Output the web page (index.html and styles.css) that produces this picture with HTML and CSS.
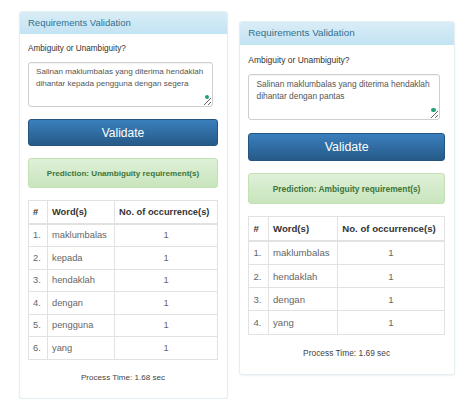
FILE: index.html
```html
<!DOCTYPE html>
<html>
<head>
<meta charset="utf-8">
<link rel="stylesheet" href="styles.css">
</head>
<body>
<div class="page">
  <div class="panel panel--a">
    <div class="panel-heading">Requirements Validation</div>
    <div class="panel-body">
      <div class="label">Ambiguity or Unambiguity?</div>
      <div class="field">
        <textarea class="input">Salinan maklumbalas yang diterima hendaklah dihantar kepada pengguna dengan segera</textarea>
        <span class="dot"></span>
      </div>
      <button class="btn">Validate</button>
      <div class="alert">Prediction: Unambiguity requirement(s)</div>
      <table class="words">
        <thead>
          <tr><th class="c-num">#</th><th class="c-word">Word(s)</th><th class="c-occ">No. of occurrence(s)</th></tr>
        </thead>
        <tbody>
          <tr><td class="c-num">1.</td><td class="c-word">maklumbalas</td><td class="c-occ">1</td></tr>
          <tr><td class="c-num">2.</td><td class="c-word">kepada</td><td class="c-occ">1</td></tr>
          <tr><td class="c-num">3.</td><td class="c-word">hendaklah</td><td class="c-occ">1</td></tr>
          <tr><td class="c-num">4.</td><td class="c-word">dengan</td><td class="c-occ">1</td></tr>
          <tr><td class="c-num">5.</td><td class="c-word">pengguna</td><td class="c-occ">1</td></tr>
          <tr><td class="c-num">6.</td><td class="c-word">yang</td><td class="c-occ">1</td></tr>
        </tbody>
      </table>
      <div class="time">Process Time: 1.68 sec</div>
    </div>
  </div>
  <div class="panel panel--b">
    <div class="panel-heading">Requirements Validation</div>
    <div class="panel-body">
      <div class="label">Ambiguity or Unambiguity?</div>
      <div class="field">
        <textarea class="input">Salinan maklumbalas yang diterima hendaklah dihantar dengan pantas</textarea>
        <span class="dot"></span>
      </div>
      <button class="btn">Validate</button>
      <div class="alert">Prediction: Ambiguity requirement(s)</div>
      <table class="words">
        <thead>
          <tr><th class="c-num">#</th><th class="c-word">Word(s)</th><th class="c-occ">No. of occurrence(s)</th></tr>
        </thead>
        <tbody>
          <tr><td class="c-num">1.</td><td class="c-word">maklumbalas</td><td class="c-occ">1</td></tr>
          <tr><td class="c-num">2.</td><td class="c-word">hendaklah</td><td class="c-occ">1</td></tr>
          <tr><td class="c-num">3.</td><td class="c-word">dengan</td><td class="c-occ">1</td></tr>
          <tr><td class="c-num">4.</td><td class="c-word">yang</td><td class="c-occ">1</td></tr>
        </tbody>
      </table>
      <div class="time">Process Time: 1.69 sec</div>
    </div>
  </div>
</div>
</body>
</html>
```
FILE: styles.css
```css
html, body {
  margin: 0;
  padding: 0;
  background: #ffffff;
}
body {
  font-family: "Liberation Sans", Arial, sans-serif;
  color: #333;
}
.page {
  display: flex;
  align-items: flex-start;
  gap: 11px;
  padding: 11px 0 0 19px;
}
.panel {
  --k: 1;
  box-sizing: border-box;
  width: calc(209px * var(--k));
  background: #fff;
  border: 1px solid #e2eef2;
  border-radius: 3px;
  box-shadow: 0 1px 2px rgba(0, 0, 0, 0.06);
  overflow: hidden;
}
.panel--b {
  --k: 1.035;
  margin-top: 10px;
}
.panel-heading {
  height: calc(21px * var(--k));
  display: flex;
  align-items: center;
  padding-left: calc(8px * var(--k));
  background: linear-gradient(#d9edf7, #c4e3f3);
  border-bottom: 1px solid #bce8f1;
  color: #31708f;
  font-size: calc(9.5px * var(--k));
}
.panel-body {
  padding: calc(9px * var(--k)) calc(9px * var(--k)) calc(14px * var(--k)) calc(8px * var(--k));
}
.label {
  font-size: calc(8.2px * var(--k));
  line-height: calc(12px * var(--k));
  color: #333;
}
.field {
  position: relative;
  margin-top: calc(7px * var(--k));
  width: calc(185px * var(--k));
  height: calc(45px * var(--k));
}
.input {
  display: block;
  box-sizing: border-box;
  width: 100%;
  height: 100%;
  margin: 0;
  padding: calc(3px * var(--k)) calc(7px * var(--k));
  border: 1px solid #cfcfcf;
  border-radius: 3px;
  font-family: "Liberation Sans", Arial, sans-serif;
  font-size: calc(8.1px * var(--k));
  line-height: calc(12px * var(--k));
  color: #555;
  background: #fff;
  box-shadow: inset 0 1px 1px rgba(0, 0, 0, 0.05);
}
.dot {
  position: absolute;
  right: calc(4px * var(--k));
  bottom: calc(8px * var(--k));
  width: calc(4px * var(--k));
  height: calc(4px * var(--k));
  border-radius: 50%;
  background: #1fa37a;
}
.btn {
  display: block;
  box-sizing: border-box;
  width: calc(190px * var(--k));
  height: calc(27px * var(--k));
  margin: calc(12px * var(--k)) 0 0 0;
  padding: 0;
  border: 1px solid #245580;
  border-radius: 3px;
  background: linear-gradient(#3a7fbd, #265a88);
  color: #fff;
  font-family: "Liberation Sans", Arial, sans-serif;
  font-size: calc(12px * var(--k));
}
.alert {
  box-sizing: border-box;
  width: calc(190px * var(--k));
  height: calc(30px * var(--k));
  margin-top: calc(12px * var(--k));
  display: flex;
  align-items: center;
  justify-content: center;
  background: linear-gradient(#dff0d8, #c8e5bc);
  border: 1px solid #c2e2b4;
  border-radius: 3px;
  color: #3c763d;
  font-weight: bold;
  font-size: calc(8.1px * var(--k));
}
.words {
  width: calc(190px * var(--k));
  margin-top: calc(12px * var(--k));
  border-collapse: collapse;
  border: 1px solid #e2e2e2;
  font-size: calc(9.3px * var(--k));
}
.words th, .words td {
  border: 1px solid #e2e2e2;
  height: calc(21.5px * var(--k));
  padding: 0 calc(4px * var(--k));
  text-align: left;
}
.words th {
  color: #333;
  font-weight: bold;
  border-bottom: 2px solid #e2e2e2;
}
.words td {
  color: #666;
}
.c-num { width: calc(10px * var(--k)); }
.c-word { width: calc(58px * var(--k)); }
.words td.c-occ { text-align: center; }
.time {
  margin-top: calc(12px * var(--k));
  text-align: center;
  font-size: calc(8.1px * var(--k));
  line-height: calc(12px * var(--k));
  color: #444;
}
```
